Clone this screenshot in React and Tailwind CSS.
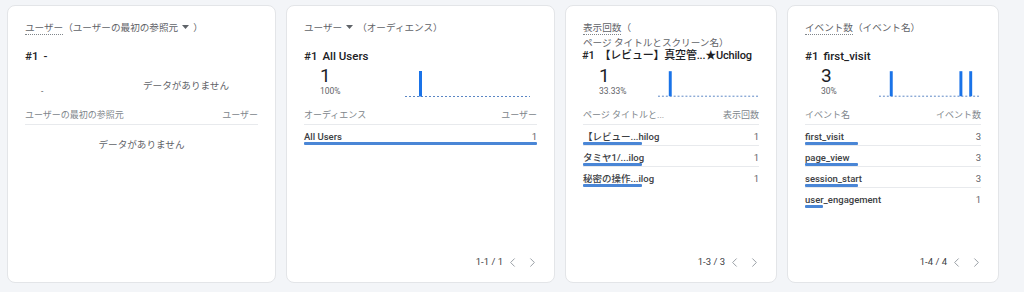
import React from 'react';
import { ChevronLeft, ChevronRight } from 'lucide-react';

const font = "font-['Roboto','Noto_Sans_CJK_JP',sans-serif]";

function Caret() {
  return (
    <svg width="7" height="4" viewBox="0 0 7 4" className="inline-block mx-[4px] mb-[2px]">
      <path d="M0 0h7L3.5 4z" fill="#5f6368" />
    </svg>
  );
}

function Dotted({ children }) {
  return <span className="border-b border-dotted border-[#80868b] pb-[1px]">{children}</span>;
}

function Spark({ width, bars }) {
  return (
    <svg width={width} height="31" viewBox={`0 0 ${width} 31`} className="block">
      <line x1="0" y1="30.5" x2={width} y2="30.5" stroke="#5b86c4" strokeWidth="1" strokeDasharray="2 2" />
      {bars.map((x) => (
        <rect key={x} x={x} y="5" width="3" height="25.5" fill="#1a73e8" />
      ))}
    </svg>
  );
}

function Card({ width, children }) {
  return (
    <div
      className={`${width} h-[278px] shrink-0 bg-white border border-[#e3e5e8] rounded-[8px] px-[17px] pt-[14px] pb-[10px] flex flex-col`}
    >
      {children}
    </div>
  );
}

function Title({ children, twoLine }) {
  return (
    <div className={`h-[26px] text-[9.6px] text-[#5f6368] whitespace-nowrap ${twoLine ? 'leading-[15px]' : 'leading-[16px]'}`}>
      {children}
    </div>
  );
}

function Top({ children, tight }) {
  return (
    <div
      className={`h-[20px] flex items-center gap-[5px] leading-[20px] font-medium text-[#202124] whitespace-nowrap ${
        tight ? 'text-[11px] tracking-[-0.2px] -ml-[1px]' : 'text-[11.5px]'
      }`}
    >
      <span>#1</span>
      <span>{children}</span>
    </div>
  );
}

function Metric({ left, value, pct, chartWidth, bars }) {
  return (
    <div className="h-[40px] flex">
      <div style={{ width: left }} className="shrink-0 pl-[16px] flex flex-col">
        <span className="text-[19px] leading-[20px] text-[#202124]">{value}</span>
        <span className="text-[8.5px] leading-[11px] text-[#5f6368]">{pct}</span>
      </div>
      <Spark width={chartWidth} bars={bars} />
    </div>
  );
}

function Head({ left, right }) {
  return (
    <div className="h-[19px] pt-[1px] flex justify-between items-start border-b border-[#e8eaed] text-[9px] leading-[16px] text-[#80868b]">
      <span>{left}</span>
      <span>{right}</span>
    </div>
  );
}

function Rows({ rows }) {
  return (
    <div className="flex flex-col">
      {rows.map((r) => (
        <div key={r.name} className="h-[21px] pt-[6px] flex flex-col border-b border-[#e8eaed] last:border-b-0">
          <div className="h-[11px] flex justify-between items-center text-[9.5px] leading-[11px]">
            <span className="font-medium text-[#3c4043]">{r.name}</span>
            <span className="text-[#5f6368]">{r.value}</span>
          </div>
          <div className="h-[3px]">
            <div className="h-[3px] bg-[#4a86d6] rounded-[1px]" style={{ width: `${r.share}%` }} />
          </div>
        </div>
      ))}
    </div>
  );
}

function Pager({ label }) {
  return (
    <div className="mt-auto h-[20px] flex justify-end items-center text-[9.5px] text-[#3c4043]">
      <span className="mr-[2px]">{label}</span>
      <ChevronLeft size={15} strokeWidth={1.6} className="text-[#9aa0a6]" />
      <ChevronRight size={15} strokeWidth={1.6} className="ml-[5px] -mr-[3px] text-[#9aa0a6]" />
    </div>
  );
}

export default function App() {
  return (
    <div className={`${font} h-[292px] w-[1024px] bg-[#f3f5f8] flex gap-[10px] pl-[7px] pt-[5px]`}>
      <Card width="w-[269px]">
        <Title>
          <Dotted>ユーザー</Dotted>（ユーザーの最初の参照元
          <Caret />）
        </Title>
        <Top>-</Top>
        <div className="h-[40px] flex">
          <div className="w-[101px] shrink-0 pl-[16px] pt-[20px] text-[8.5px] leading-[11px] text-[#5f6368]">-</div>
          <div className="flex-1 pt-[10px] pl-[17px] text-[9.6px] leading-[20px] text-[#5f6368]">データがありません</div>
        </div>
        <Head left="ユーザーの最初の参照元" right="ユーザー" />
        <div className="pt-[11px] text-center text-[9.6px] leading-[18px] text-[#5f6368]">データがありません</div>
      </Card>

      <Card width="w-[269px]">
        <Title>
          ユーザー
          <Caret />（オーディエンス）
        </Title>
        <Top>All Users</Top>
        <Metric left={101} value="1" pct="100%" chartWidth={125} bars={[14]} />
        <Head left="オーディエンス" right="ユーザー" />
        <Rows rows={[{ name: 'All Users', value: 1, share: 100 }]} />
        <Pager label="1-1 / 1" />
      </Card>

      <Card width="w-[212px]">
        <Title twoLine>
          <Dotted>表示回数</Dotted>（
          <br />
          ページ タイトルとスクリーン名）
        </Title>
        <Top tight>【レビュー】真空管...★Uchilog</Top>
        <Metric left={75} value="1" pct="33.33%" chartWidth={103} bars={[11]} />
        <Head left="ページ タイトルと..." right="表示回数" />
        <Rows
          rows={[
            { name: '【レビュー...hilog', value: 1, share: 33.33 },
            { name: 'タミヤ1/...ilog', value: 1, share: 33.33 },
            { name: '秘密の操作...ilog', value: 1, share: 33.33 },
          ]}
        />
        <Pager label="1-3 / 3" />
      </Card>

      <Card width="w-[212px]">
        <Title>
          <Dotted>イベント数</Dotted>（イベント名）
        </Title>
        <Top>first_visit</Top>
        <Metric left={74} value="3" pct="30%" chartWidth={104} bars={[11, 82, 92]} />
        <Head left="イベント名" right="イベント数" />
        <Rows
          rows={[
            { name: 'first_visit', value: 3, share: 30 },
            { name: 'page_view', value: 3, share: 30 },
            { name: 'session_start', value: 3, share: 30 },
            { name: 'user_engagement', value: 1, share: 10 },
          ]}
        />
        <Pager label="1-4 / 4" />
      </Card>
    </div>
  );
}
